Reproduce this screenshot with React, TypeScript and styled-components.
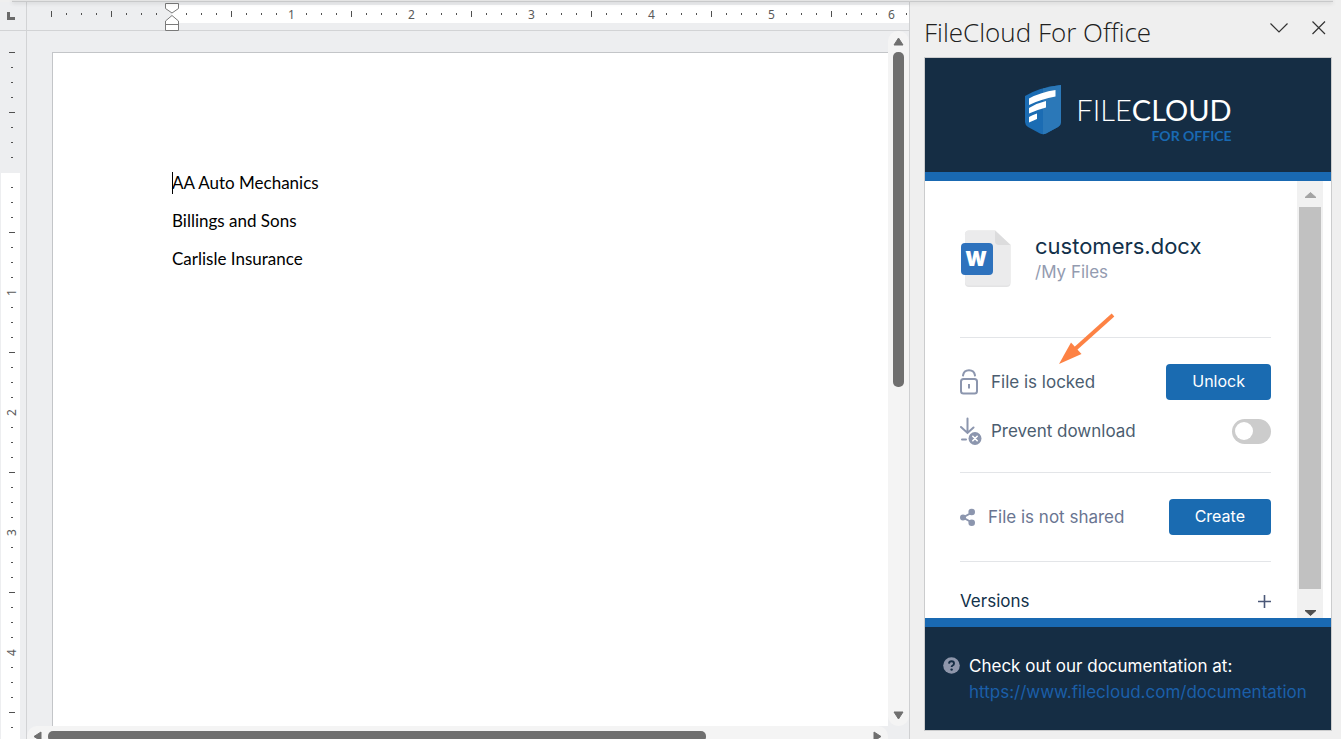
import React from "react";
import styled, { createGlobalStyle } from "styled-components";

const GlobalStyle = createGlobalStyle`
  *, *::before, *::after { box-sizing: border-box; }
  body { margin: 0; background: #efefef; overflow: hidden; }
  h1, h2, p { margin: 0; font-weight: 400; }
  button { font: inherit; border: 0; padding: 0; cursor: pointer; }
`;

const Window = styled.div`
  display: flex;
  flex-direction: column;
  height: 100vh;
  background: #efefef;
`;

const RibbonEdge = styled.div`
  flex: none;
  height: 2px;
  margin: 0 8px 0 12px;
  background: #e4e4e4;
  border-bottom: 1px solid #c8c9ca;
  box-shadow: 0 1px 4px rgba(0, 0, 0, 0.16);
  z-index: 1;
`;

const Workspace = styled.div`
  display: flex;
  flex: 1;
  min-height: 0;
`;

/* ---------- document editor ---------- */

const Editor = styled.main`
  display: flex;
  flex-direction: column;
  flex: 1;
  min-width: 0;
  background: #edeef0;
  border-right: 1px solid #cfd0d2;
`;

const RulerRow = styled.div`
  position: relative;
  display: flex;
  flex: none;
  height: 29px;
  border-bottom: 1px solid #d2d3d5;
`;

const TabSelector = styled.button`
  display: flex;
  align-items: center;
  justify-content: flex-start;
  flex: none;
  width: 27px;
  padding-left: 7px;
  background: transparent;
  border-right: 1px solid #d2d3d5;
`;

const HorizontalRuler = styled.div`
  display: flex;
  flex: 1;
  min-width: 0;
  height: 18px;
  margin-top: 3px;
  padding-left: 17px;
  overflow: hidden;
  background: linear-gradient(to right, #edeef0 145px, #ffffff 145px);
`;

const VerticalRuler = styled.div`
  display: flex;
  flex-direction: column;
  flex: none;
  width: 20px;
  padding-top: 14px;
  overflow: hidden;
  border-left: 1px solid #edeef0;
  background: linear-gradient(to bottom, #edeef0 142px, #ffffff 142px);
`;

const RulerGutter = styled.div`
  display: flex;
  flex: none;
  width: 27px;
  border-right: 1px solid #d2d3d5;
  background: #edeef0;
`;

const RulerCell = styled.span<{ $vertical?: boolean }>`
  display: flex;
  align-items: center;
  justify-content: center;
  flex: none;
  width: ${(p) => (p.$vertical ? "auto" : "15px")};
  height: ${(p) => (p.$vertical ? "15px" : "auto")};
  padding-left: ${(p) => (p.$vertical ? "3px" : "0")};
  color: #5a5a5a;
  font: 12px/15px "Noto Sans", sans-serif;
`;

const Tick = styled.i<{ $vertical?: boolean; $long?: boolean }>`
  width: ${(p) => (p.$vertical ? (p.$long ? "6px" : "2px") : "1px")};
  height: ${(p) => (p.$vertical ? "1px" : p.$long ? "6px" : "2px")};
  background: #505050;
`;

const SideNumber = styled.span`
  margin-right: 2px;
  transform: rotate(-90deg);
`;

const IndentMarker = styled.svg`
  position: absolute;
  left: 165px;
  top: 1px;
`;

const EditorBody = styled.div`
  display: flex;
  flex: 1;
  min-height: 0;
`;

const CanvasColumn = styled.div`
  display: flex;
  flex-direction: column;
  flex: 1;
  min-width: 0;
`;

const Canvas = styled.div`
  display: flex;
  flex: 1;
  min-height: 0;
  padding: 21px 0 0 25px;
`;

const Page = styled.article`
  flex: 1;
  padding: 119px 119px 0;
  background: #ffffff;
  border: 1px solid #c3c5c8;
  border-width: 1px 0 0 1px;
  color: #000000;
  font: 17px/22px Lato, sans-serif;
`;

const Paragraph = styled.p`
  display: flex;
  align-items: center;
  margin-bottom: 16px;
`;

const Caret = styled.i`
  width: 1px;
  height: 22px;
  margin-right: -1px;
  background: #000000;
`;

const EditorScrollY = styled.div`
  display: flex;
  flex-direction: column;
  align-items: center;
  flex: none;
  width: 21px;
  margin-bottom: 13px;
  padding: 6px 0;
  border-radius: 10px;
  background: #f4f4f4;
`;

const EditorThumbY = styled.div`
  width: 11px;
  height: 49%;
  margin: 6px 0 auto;
  border-radius: 5px;
  background: #6f6f6f;
`;

const EditorScrollX = styled.div`
  display: flex;
  align-items: flex-start;
  flex: none;
  height: 13px;
  padding: 5px 6px 0;
  overflow: hidden;
  border-radius: 10px 10px 0 0;
  background: #f4f4f4;
`;

const EditorThumbX = styled.div`
  flex: none;
  width: calc(100% * 31 / 40);
  height: 11px;
  margin: 0 auto 0 6px;
  border-radius: 5px;
  background: #6f6f6f;
`;

/* ---------- task pane ---------- */

const TaskPane = styled.aside`
  display: flex;
  flex-direction: column;
  flex: none;
  width: 431px;
  padding: 0 9px 8px 14px;
  background: #efefef;
  font-family: Inter, sans-serif;
`;

const PaneHeader = styled.header`
  display: flex;
  align-items: center;
  flex: none;
  height: 55px;
  padding-top: 4px;
`;

const PaneTitle = styled.h1`
  flex: 1;
  color: #202020;
  font: 300 26px/36px "Open Sans", "Noto Sans", sans-serif;
`;

const PaneButton = styled.button`
  display: flex;
  align-items: center;
  justify-content: center;
  width: 20px;
  height: 20px;
  margin: 0 3px 7px 17px;
  background: transparent;
`;

const AddIn = styled.section`
  display: flex;
  flex-direction: column;
  flex: 1;
  min-height: 0;
  border: 1px solid #cbcccd;
  background: #ffffff;
`;

const Brand = styled.div`
  display: flex;
  align-items: flex-start;
  justify-content: center;
  gap: 14px;
  flex: none;
  height: 123px;
  padding-top: 27px;
  border-bottom: 9px solid #1969b2;
  background: #152d44;
`;

const Wordmark = styled.div`
  display: flex;
  flex-direction: column;
  align-items: flex-end;
  padding-top: 10px;
`;

const WordmarkName = styled.span`
  color: #ffffff;
  font: 300 29px/30px Lato, sans-serif;
  b { font-weight: 400; }
`;

const WordmarkSub = styled.span`
  color: #1969b2;
  font: 700 14px/22px Lato, sans-serif;
`;

const PanelBody = styled.div`
  display: flex;
  flex: 1;
  min-height: 0;
  padding-right: 8px;
`;

const Panel = styled.div`
  position: relative;
  flex: 1;
  min-width: 0;
  padding: 0 26px 0 35px;
  overflow: hidden;
`;

const Section = styled.section`
  display: flex;
  flex-direction: column;
  gap: 16px;
  padding: 26px 0;
  border-bottom: 1px solid #e3e5e8;
`;

const FileSummary = styled.section`
  display: flex;
  align-items: center;
  gap: 24px;
  height: 157px;
  border-bottom: 1px solid #e3e5e8;
`;

const FileName = styled.h2`
  color: #12314a;
  font-size: 22px;
  line-height: 26px;
`;

const FilePath = styled.p`
  color: #939bb0;
  font-size: 17px;
  line-height: 26px;
`;

const Row = styled.div`
  display: flex;
  align-items: center;
  justify-content: space-between;
  min-height: 30px;
`;

const RowLabel = styled.label<{ $muted?: boolean; $tight?: boolean }>`
  display: flex;
  align-items: center;
  gap: ${(p) => (p.$tight ? "12px" : "9px")};
  color: ${(p) => (p.$muted ? "#6a7591" : "#4b5d70")};
  font-size: 17px;
  line-height: 24px;
`;

const ActionButton = styled.button`
  height: 36px;
  padding: 0 26px 2px;
  border-radius: 4px;
  background: #1a6bb1;
  color: #ffffff;
  font-size: 16px;
  line-height: 34px;
`;

const Toggle = styled.input`
  appearance: none;
  display: flex;
  align-items: center;
  width: 39px;
  height: 25px;
  margin: 0;
  padding: 0 3px;
  border-radius: 13px;
  background: #cccccc;
  &::before {
    content: "";
    width: 18px;
    height: 18px;
    border-radius: 50%;
    background: #ffffff;
  }
  &:checked { background: #1a6bb1; justify-content: flex-end; }
`;

const VersionsButton = styled.button`
  display: flex;
  align-items: center;
  justify-content: space-between;
  width: 100%;
  height: 78px;
  background: transparent;
  color: #12314a;
  font-size: 17px;
`;

const Pointer = styled.svg`
  position: absolute;
  left: 132px;
  top: 131px;
`;

const PanelScroll = styled.div`
  display: flex;
  flex-direction: column;
  align-items: center;
  flex: none;
  width: 26px;
  padding: 11px 0 2px;
  background: #f1f1f1;
`;

const PanelThumb = styled.div`
  flex: 1;
  width: 22px;
  margin: 9px 0 21px;
  background: #c1c1c1;
`;

const Help = styled.footer`
  display: flex;
  gap: 9px;
  flex: none;
  height: 112px;
  padding: 26px 16px 0 18px;
  border-top: 9px solid #1969b2;
  background: #152d44;
  color: #ffffff;
  font-size: 17px;
  line-height: 26px;
  svg { flex: none; margin-top: 4px; }
`;

const HelpLink = styled.a`
  display: block;
  color: #1b5fa9;
  text-decoration: none;
`;

/* ---------- drawings ---------- */

const Glyph = styled.svg`
  flex: none;
`;

const Triangle = ({ w, h, d, color = "#6f6f6f" }: { w: number; h: number; d: string; color?: string }) => (
  <Glyph width={w} height={h} viewBox={`0 0 ${w} ${h}`} aria-hidden="true">
    <path d={d} fill={color} stroke={color} strokeLinejoin="round" />
  </Glyph>
);

const ShieldLogo = () => (
  <svg width="38" height="50" viewBox="0 0 38 50" aria-hidden="true">
    <path d="M1 11 Q16 2 37 0 V37 Q37 40 34 42 L22 48.500 Q19 50 16 48.500 L4 42 Q1 40 1 37Z" fill="#1b6cb3" />
    <path d="M19 3.500 Q27 1 37 0 V37 Q37 40 34 42 L22 48.500 Q20.500 49.300 19 49.300Z" fill="#2b78b8" />
    <path d="M5 13.500 Q17 7 31.500 5 V11.500 Q17 14 5 20Z M5 23 Q13 18 22 16 V22.500 Q14 24.500 5 28.500Z M5 32 Q9 29.500 13 28.500 V34 Q9 35.500 5 37.500Z" fill="#fff" />
  </svg>
);

const WordFile = () => (
  <svg width="51" height="58" viewBox="0 0 51 58" aria-hidden="true">
    <path d="M9 0.500 H35 L50.500 15 V53 Q50.500 57 46.500 57 H9 Q5 57 5 53 V4.500 Q5 0.500 9 0.500Z" fill="#e3e3e4" />
    <path d="M9 0.500 H35 L50.500 15 V51.500 Q50.500 55.500 46.500 55.500 H9 Q5 55.500 5 51.500 V4.500 Q5 0.500 9 0.500Z" fill="#ebebec" />
    <path d="M35 0.500 L50.500 15 H39 Q35 15 35 11Z" fill="#dcdcdd" />
    <rect x="1" y="13" width="32" height="32" rx="4" fill="#2e72bd" />
    <text x="16" y="36" textAnchor="middle" fontFamily="Inter, sans-serif" fontSize="20" fontWeight="900" fill="#fff">W</text>
  </svg>
);

const LockIcon = () => (
  <svg width="22" height="28" viewBox="0 0 22 28" fill="none" stroke="#8c96ae" strokeWidth="2" aria-hidden="true">
    <rect x="1" y="11" width="16" height="14.500" rx="2.500" />
    <path d="M3 7.500 C4 0.500 14 0.500 15 7.500" strokeLinecap="round" />
    <path d="M9 16 V20.500" />
  </svg>
);

const PreventDownloadIcon = () => (
  <svg width="22" height="28" viewBox="0 0 22 28" fill="none" stroke="#8c96ae" strokeWidth="2" strokeLinecap="round" aria-hidden="true">
    <path d="M7.500 1.500 V15.500 M1 10 L7.500 16 L13.500 10.500 M2 22.500 H6" />
    <circle cx="15" cy="21.500" r="6.500" fill="#8c96ae" stroke="none" />
    <path d="M12.800 19.300 L17.200 23.700 M17.200 19.300 L12.800 23.700" stroke="#fff" strokeWidth="1.600" />
  </svg>
);

const ShareIcon = () => (
  <svg width="16" height="18" viewBox="0 0 16 18" fill="#8c96ae" stroke="#8c96ae" strokeWidth="2" aria-hidden="true">
    <path d="M12 4.500 L3 9.500 L12 14.500" fill="none" />
    <circle cx="11.700" cy="4" r="2.300" />
    <circle cx="3" cy="9.500" r="2" />
    <circle cx="11.700" cy="14.700" r="2.300" />
  </svg>
);

const HelpIcon = () => (
  <svg width="17" height="17" viewBox="0 0 17 17" aria-hidden="true">
    <circle cx="8.500" cy="8.500" r="8.300" fill="#8e96ab" />
    <path d="M6 6.600 Q6.200 4.300 8.500 4.300 Q11 4.300 11 6.500 Q11 7.800 9.600 8.500 Q8.600 9 8.600 10" fill="none" stroke="#152d44" strokeWidth="1.900" />
    <circle cx="8.600" cy="12.600" r="1.200" fill="#152d44" />
  </svg>
);

/* Eight marks to the inch; the page margin takes the first inch. */
const RulerMark = ({ index, vertical }: { index: number; vertical?: boolean }) => {
  if (index === 8) return null;
  if (index > 8 && index % 8 === 0) {
    const inch = index / 8 - 1;
    return vertical ? <SideNumber>{inch}</SideNumber> : <>{inch}</>;
  }
  return <Tick $vertical={vertical} $long={index === 0 || index % 8 === 4} />;
};

const RulerMarks = ({ vertical, count }: { vertical?: boolean; count: number }) => (
  <>
    {Array.from({ length: count }, (_, i) => (
      <RulerCell key={i} $vertical={vertical}>
        <RulerMark index={i} vertical={vertical} />
      </RulerCell>
    ))}
  </>
);

export default function App() {
  return (
    <Window>
      <GlobalStyle />
      <RibbonEdge />
      <Workspace>
        <Editor>
          <RulerRow>
            <TabSelector aria-label="Tab stop type">
              <svg width="8" height="8" viewBox="0 0 8 8" aria-hidden="true">
                <path d="M0 0 H3 V5 H8 V8 H0Z" fill="#6a6a6a" />
              </svg>
            </TabSelector>
            <HorizontalRuler>
              <RulerMarks count={64} />
            </HorizontalRuler>
            <IndentMarker width="15" height="28" viewBox="0 0 15 28" aria-hidden="true">
              <path d="M0.500 0.500 H13.500 V5.500 L7 10 L0.500 5.500Z M7 12.500 L13.500 18 V27.500 H0.500 V18Z M0.500 21.500 H13.500" fill="#fff" stroke="#7a7a7a" />
            </IndentMarker>
          </RulerRow>
          <EditorBody>
            <RulerGutter>
              <VerticalRuler>
                <RulerMarks vertical count={48} />
              </VerticalRuler>
            </RulerGutter>
            <CanvasColumn>
              <Canvas>
                <Page>
                  <Paragraph><Caret />AA Auto Mechanics</Paragraph>
                  <Paragraph>Billings and Sons</Paragraph>
                  <Paragraph>Carlisle Insurance</Paragraph>
                </Page>
              </Canvas>
              <EditorScrollX>
                <Triangle w={9} h={11} d="M8 1 V10 L1 5.500Z" />
                <EditorThumbX />
                <Triangle w={9} h={11} d="M1 1 V10 L8 5.500Z" />
              </EditorScrollX>
            </CanvasColumn>
            <EditorScrollY>
              <Triangle w={11} h={9} d="M1 8 H10 L5.500 1Z" />
              <EditorThumbY />
              <Triangle w={11} h={9} d="M1 1 H10 L5.500 8Z" />
            </EditorScrollY>
          </EditorBody>
        </Editor>

        <TaskPane>
          <PaneHeader>
            <PaneTitle>FileCloud For Office</PaneTitle>
            <PaneButton aria-label="Pane options">
              <svg width="18" height="10" viewBox="0 0 18 10" fill="none" stroke="#333" strokeWidth="1.200" aria-hidden="true">
                <path d="M0.500 0.500 L9 9 L17.500 0.500" />
              </svg>
            </PaneButton>
            <PaneButton aria-label="Close">
              <svg width="14" height="14" viewBox="0 0 14 14" fill="none" stroke="#333" strokeWidth="1.200" aria-hidden="true">
                <path d="M0.500 0.500 L13 13 M13 0.500 L0.500 13" />
              </svg>
            </PaneButton>
          </PaneHeader>
          <AddIn>
            <Brand>
              <ShieldLogo />
              <Wordmark>
                <WordmarkName>FILE<b>CLOUD</b></WordmarkName>
                <WordmarkSub>FOR OFFICE</WordmarkSub>
              </Wordmark>
            </Brand>
            <PanelBody>
              <Panel>
                <FileSummary>
                  <WordFile />
                  <div>
                    <FileName>customers.docx</FileName>
                    <FilePath>/My Files</FilePath>
                  </div>
                </FileSummary>
                <Section>
                  <Row>
                    <RowLabel htmlFor="unlock"><LockIcon />File is locked</RowLabel>
                    <ActionButton id="unlock">Unlock</ActionButton>
                  </Row>
                  <Row>
                    <RowLabel htmlFor="prevent"><PreventDownloadIcon />Prevent download</RowLabel>
                    <Toggle id="prevent" type="checkbox" role="switch" />
                  </Row>
                </Section>
                <Section>
                  <Row>
                    <RowLabel htmlFor="create" $muted $tight><ShareIcon />File is not shared</RowLabel>
                    <ActionButton id="create">Create</ActionButton>
                  </Row>
                </Section>
                <VersionsButton>
                  Versions
                  <svg width="13" height="13" viewBox="0 0 13 13" stroke="#4b5878" strokeWidth="1.600" aria-hidden="true">
                    <path d="M0 6.500 H13 M6.500 0 V13" />
                  </svg>
                </VersionsButton>
                <Pointer width="60" height="55" viewBox="0 0 60 55" aria-hidden="true">
                  <path d="M56 3 L17 38" stroke="#fd8244" strokeWidth="4" />
                  <path d="M2 52 L14 30.500 L24.500 42Z" fill="#fd8244" />
                </Pointer>
              </Panel>
              <PanelScroll>
                <Triangle w={13} h={6} d="M1 5.500 H12 L6.500 0.500Z" color="#a3a3a3" />
                <PanelThumb />
                <Triangle w={13} h={6} d="M1 0.500 H12 L6.500 5.500Z" color="#505050" />
              </PanelScroll>
            </PanelBody>
            <Help>
              <HelpIcon />
              <div>
                Check out our documentation at:
                <HelpLink href="https://www.filecloud.com/documentation">https://www.filecloud.com/documentation</HelpLink>
              </div>
            </Help>
          </AddIn>
        </TaskPane>
      </Workspace>
    </Window>
  );
}
